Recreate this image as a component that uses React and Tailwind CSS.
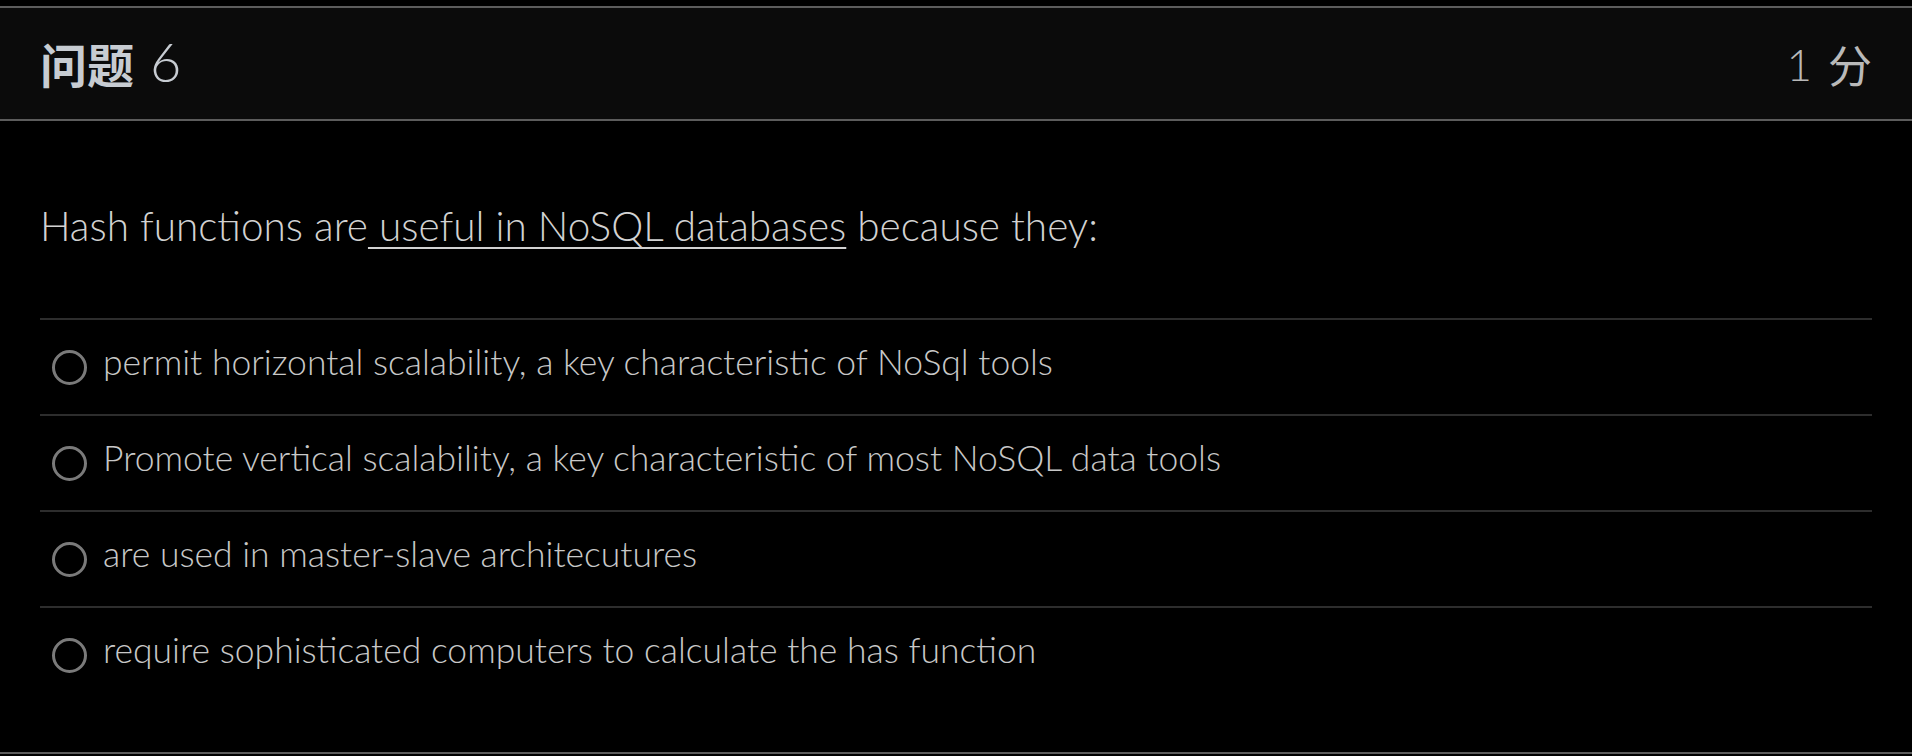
import React from "react";

const OPTIONS = [
    "permit horizontal scalability, a key characteristic of NoSql tools",
    "Promote vertical scalability, a key characteristic of most NoSQL data tools",
    "are used in master-slave architecutures",
    "require sophisticated computers to calculate the has function",
];

export default function App() {
    return (
        <div className="min-h-screen w-full bg-black pt-[6px] font-['Lato_Light','Lato','Noto_Sans_CJK_SC',sans-serif]">
            {/* Header */}
            <div className="flex h-[115px] items-center justify-between border-y-2 border-[#5c5c5c] bg-[#0b0b0b] px-10">
                <h2 className="-mt-[3px] flex items-center gap-4 leading-none text-[#c7ccd2]">
                    <span className="text-[47px] font-bold font-['Noto_Sans_CJK_SC',sans-serif]">问题</span>
                    <span className="text-[54px] font-light">6</span>
                </h2>
                <div className="flex items-center gap-4 text-[44px] leading-none text-[#b9b9b9]">
                    <span className="font-light">1</span>
                    <span className="font-['Noto_Sans_CJK_SC',sans-serif]">分</span>
                </div>
            </div>

            {/* Body */}
            <div className="border-b-2 border-[#5c5c5c] px-10 pb-[50px]">
                <p className="pt-[76px] pb-[63px] text-[40.5px] font-light leading-[58px] text-[#d2d2d2]">
                    Hash functions are
                    <span className="underline decoration-2 underline-offset-[6px]"> useful in NoSQL databases</span>
                    {" "}because they:
                </p>
                <ul>
                    {OPTIONS.map((opt) => (
                        <li
                            key={opt}
                            className="flex h-[96px] items-center gap-4 border-t-2 border-[#2d2d2d] pl-3"
                        >
                            <span className="h-[35px] w-[35px] flex-shrink-0 rounded-full border-[3px] border-[#7a7a7a]" />
                            <span className="pb-[10px] text-[35.5px] font-light text-[#c8c8c8]">{opt}</span>
                        </li>
                    ))}
                </ul>
            </div>
        </div>
    );
}
